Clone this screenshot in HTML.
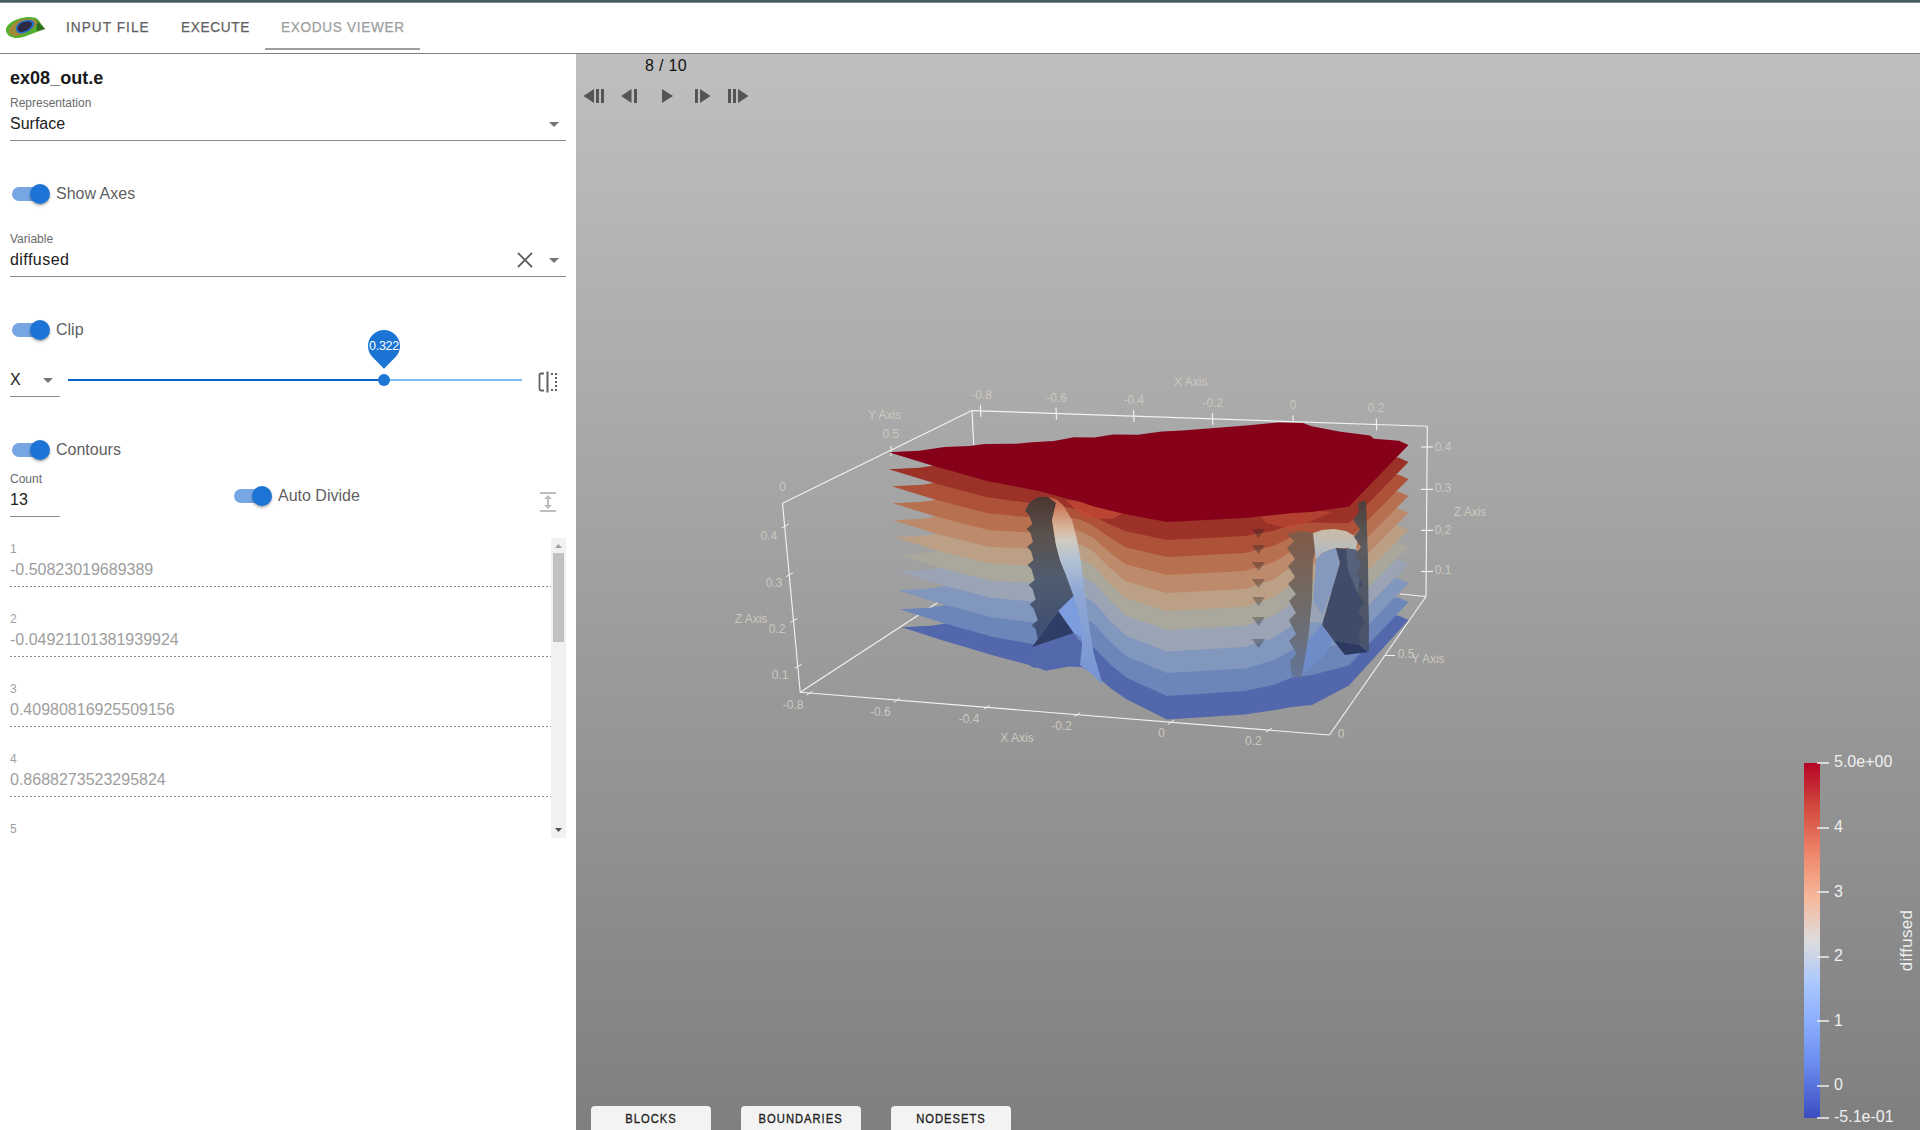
<!DOCTYPE html>
<html><head><meta charset="utf-8">
<style>
*{box-sizing:border-box;margin:0;padding:0}
html,body{width:1920px;height:1130px;overflow:hidden;background:#fff;font-family:"Liberation Sans",sans-serif;color:#212121}
.abs{position:absolute}
.t{position:absolute;white-space:nowrap;line-height:1}
#topbar{position:absolute;left:0;top:0;width:1920px;height:3px;background:linear-gradient(#485a64 0,#455760 2px,#7f8c93 2px)}
#hline{position:absolute;left:0;top:53px;width:1920px;height:1px;background:#7f7f7f}
.tab{position:absolute;top:18.5px;font-size:15.5px;letter-spacing:0.75px;color:#616161;white-space:nowrap;line-height:1;transform:scaleX(0.88);transform-origin:0 0;-webkit-text-stroke:0.25px}
#viewer{position:absolute;left:576px;top:54px;width:1344px;height:1076px;background:linear-gradient(#bfbfbf,#7f7f7f)}
.lbl{position:absolute;font-size:12px;color:#6b6b6b;white-space:nowrap;line-height:1}
.val{position:absolute;font-size:16px;color:#212121;white-space:nowrap;line-height:1}
.uline{position:absolute;height:1px;background:#8c8c8c}
.sw{position:absolute;width:40px;height:24px}
.sw .track{position:absolute;left:0;top:3px;width:34px;height:14px;border-radius:7px;background:#76a6e4}
.sw .knob{position:absolute;left:18px;top:0;width:20px;height:20px;border-radius:50%;background:#1c74d4;box-shadow:0 2px 3px rgba(0,0,0,.25),0 1px 1px rgba(0,0,0,.14)}
.swl{position:absolute;font-size:16px;color:#5f5f5f;white-space:nowrap;line-height:1}
.cidx{position:absolute;font-size:12px;color:#9e9e9e;line-height:1}
.cval{position:absolute;font-size:16px;color:#9e9e9e;white-space:nowrap;line-height:1;margin-top:1px}
.dline{position:absolute;left:10px;width:541px;height:1px;background:repeating-linear-gradient(90deg,#8a8a8a 0 2px,transparent 2px 4px)}
.btn{position:absolute;top:1106px;width:120px;height:30px;background:#f3f3f3;border-radius:4px;font-size:13.5px;letter-spacing:1.2px;color:#212121;text-align:center;font-weight:normal;line-height:1;-webkit-text-stroke:0.35px}
.btn span{display:inline-block;transform:scaleX(0.83)}
.axl{position:absolute;width:80px;text-align:center;font-size:12px;color:#ccc8be;line-height:16px;white-space:nowrap}
.cbl{position:absolute;font-size:16px;color:#efefef;white-space:nowrap;line-height:1}
</style></head><body>
<div id="topbar"></div>
<div id="hline"></div>
<!-- logo -->
<svg class="abs" style="left:0;top:0" width="50" height="45" viewBox="0 0 50 45">
  <path d="M6,31 C5,25 14,19 24,17.5 C30,16.5 35,17 38,19.5 L45,29 C40,31 33,33 25,36.5 C18,39 8,39 6,31 Z" fill="#52b22e"/>
  <path d="M36,19.5 L45,29 L37,31 Z" fill="#2f6e22"/>
  <path d="M9,32 C9,26 15,20 24,19 C31,18 36,19 38,22 C36,27 30,31 24,34 C17,37 10,37 9,32 Z" fill="#a08a3a"/>
  <path d="M16,29 C16,24 21,20 28,20 C33,20 35,22 34,25 C32,30 27,32.5 22,33.5 C18,34 16,32 16,29 Z" fill="#2070d0"/>
  <path d="M17.6,28.5 C18,24.5 22,21.5 27.5,21.5 C31.5,21.5 32.5,23 31.5,25.5 C30,29 26,31 22.5,31.8 C19.5,32.3 17.6,31 17.6,28.5 Z" fill="#2e2a44"/>
</svg>
<div class="tab" style="left:66px;letter-spacing:1.18px">INPUT FILE</div>
<div class="tab" style="left:181px">EXECUTE</div>
<div class="tab" style="left:281px;color:#9e9e9e">EXODUS VIEWER</div>
<div class="abs" style="left:265px;top:48px;width:155px;height:2px;background:#9e9e9e"></div>

<!-- left panel -->
<div class="t" style="left:10px;top:68px;font-size:19px;font-weight:bold;color:#1a1a1a;transform:scaleX(0.95);transform-origin:0 0">ex08_out.e</div>
<div class="lbl" style="left:10px;top:97px">Representation</div>
<div class="val" style="left:10px;top:116px">Surface</div>
<svg class="abs" style="left:549px;top:122px" width="10" height="5"><path d="M0,0 L10,0 L5,5 Z" fill="#757575"/></svg>
<div class="uline" style="left:10px;top:140px;width:556px"></div>

<div class="sw" style="left:12px;top:184px"><div class="track"></div><div class="knob"></div></div>
<div class="swl" style="left:56px;top:186px">Show Axes</div>

<div class="lbl" style="left:10px;top:233px">Variable</div>
<div class="val" style="left:10px;top:252px;letter-spacing:0.45px">diffused</div>
<svg class="abs" style="left:516px;top:251px" width="18" height="18" viewBox="0 0 18 18"><path d="M2,2 L16,16 M16,2 L2,16" stroke="#616161" stroke-width="1.8"/></svg>
<svg class="abs" style="left:549px;top:258px" width="10" height="5"><path d="M0,0 L10,0 L5,5 Z" fill="#757575"/></svg>
<div class="uline" style="left:10px;top:276px;width:556px"></div>

<div class="sw" style="left:12px;top:320px"><div class="track"></div><div class="knob"></div></div>
<div class="swl" style="left:56px;top:322px">Clip</div>

<div class="val" style="left:10px;top:372px">X</div>
<svg class="abs" style="left:43px;top:378px" width="10" height="5"><path d="M0,0 L10,0 L5,5 Z" fill="#757575"/></svg>
<div class="uline" style="left:10px;top:396px;width:50px"></div>
<!-- slider -->
<div class="abs" style="left:68px;top:379px;width:316px;height:2px;background:#0a63c9"></div>
<div class="abs" style="left:384px;top:379px;width:138px;height:2px;background:#82bcf8"></div>
<div class="abs" style="left:378px;top:374px;width:12px;height:12px;border-radius:50%;background:#1c74d4"></div>
<div class="abs" style="left:368px;top:330px;width:32px;height:32px;border-radius:50% 50% 50% 0;background:#1c74d4;transform:rotate(-45deg)"></div>
<div class="t" style="left:369px;top:340px;font-size:12.5px;color:#fff;width:30px;text-align:center;letter-spacing:-0.3px">0.322</div>
<svg class="abs" style="left:536px;top:370px" width="24" height="24" viewBox="0 0 24 24">
 <path d="M8,3.5 H5 Q3.5,3.5 3.5,5 V19 Q3.5,20.5 5,20.5 H8" fill="none" stroke="#616161" stroke-width="1.8"/>
 <rect x="10.5" y="1.5" width="2" height="21" fill="#616161"/>
 <rect x="15" y="3" width="2" height="2" fill="#616161"/><rect x="15" y="19" width="2" height="2" fill="#616161"/>
 <rect x="19" y="3" width="2" height="2" fill="#616161"/><rect x="19" y="7" width="2" height="2" fill="#616161"/><rect x="19" y="11" width="2" height="2" fill="#616161"/><rect x="19" y="15" width="2" height="2" fill="#616161"/><rect x="19" y="19" width="2" height="2" fill="#616161"/>
</svg>

<div class="sw" style="left:12px;top:440px"><div class="track"></div><div class="knob"></div></div>
<div class="swl" style="left:56px;top:442px">Contours</div>

<div class="lbl" style="left:10px;top:473px">Count</div>
<div class="val" style="left:10px;top:492px">13</div>
<div class="uline" style="left:10px;top:516px;width:50px"></div>

<div class="sw" style="left:234px;top:486px"><div class="track"></div><div class="knob"></div></div>
<div class="swl" style="left:278px;top:488px">Auto Divide</div>
<svg class="abs" style="left:536px;top:489px" width="24" height="26" viewBox="0 0 24 26">
 <rect x="4" y="3" width="16" height="2" fill="#bdbdbd"/><rect x="4" y="21" width="16" height="2" fill="#bdbdbd"/>
 <path d="M12,6 L16,10 H13 V16 H16 L12,20 L8,16 H11 V10 H8 Z" fill="#bdbdbd"/>
</svg>

<!-- contour list -->
<div class="abs" style="left:0;top:538px;width:576px;height:300px;overflow:hidden">
 <div class="cidx" style="left:10px;top:5px">1</div>
 <div class="cval" style="left:10px;top:23px">-0.50823019689389</div>
 <div class="dline" style="top:48px"></div>
 <div class="cidx" style="left:10px;top:75px">2</div>
 <div class="cval" style="left:10px;top:93px">-0.04921101381939924</div>
 <div class="dline" style="top:118px"></div>
 <div class="cidx" style="left:10px;top:145px">3</div>
 <div class="cval" style="left:10px;top:163px">0.40980816925509156</div>
 <div class="dline" style="top:188px"></div>
 <div class="cidx" style="left:10px;top:215px">4</div>
 <div class="cval" style="left:10px;top:233px">0.8688273523295824</div>
 <div class="dline" style="top:258px"></div>
 <div class="cidx" style="left:10px;top:285px">5</div>
</div>
<!-- scrollbar -->
<div class="abs" style="left:551px;top:538px;width:15px;height:300px;background:#f1f1f1"></div>
<div class="abs" style="left:553px;top:553px;width:11px;height:89px;background:#c1c1c1"></div>
<svg class="abs" style="left:551px;top:538px" width="15" height="15"><path d="M4,10 L11,10 L7.5,6 Z" fill="#a3a3a3"/></svg>
<svg class="abs" style="left:551px;top:823px" width="15" height="15"><path d="M4,5 L11,5 L7.5,9 Z" fill="#505050"/></svg>

<!-- viewer -->
<div id="viewer"></div>
<div class="t" style="left:645px;top:58px;font-size:16px;color:#111;letter-spacing:0.3px">8 / 10</div>
<svg class="abs" style="left:576px;top:80px" width="200" height="30" viewBox="0 0 200 30">
 <g fill="#555">
  <path d="M7.5,16 L18,9 V23 Z"/><rect x="20" y="9" width="3" height="14"/><rect x="25" y="9" width="3" height="14"/>
  <path d="M45,16 L55.5,9 V23 Z"/><rect x="58" y="9" width="3" height="14"/>
  <path d="M86,9 L97,16 L86,23 Z"/>
  <rect x="119" y="9" width="3" height="14"/><path d="M124,9 L134.5,16 L124,23 Z"/>
  <rect x="152" y="9" width="3" height="14"/><rect x="157" y="9" width="3" height="14"/><path d="M162,9 L172.5,16 L162,23 Z"/>
 </g>
</svg>

<svg class="abs" style="left:0;top:0" width="1920" height="1130" viewBox="0 0 1920 1130">
<line x1="972" y1="410.6" x2="1427.3" y2="426.25" stroke="#f2f2f2" stroke-width="1.15"/>
<line x1="972" y1="410.6" x2="782.5" y2="503.3" stroke="#f2f2f2" stroke-width="1.15"/>
<line x1="972" y1="410.6" x2="974" y2="450" stroke="#f2f2f2" stroke-width="1.15"/>
<line x1="782.5" y1="503.3" x2="800.2" y2="692.3" stroke="#f2f2f2" stroke-width="1.15"/>
<line x1="800.2" y1="692.3" x2="940" y2="601" stroke="#f2f2f2" stroke-width="1.15"/>
<line x1="800.2" y1="692.3" x2="1329.4" y2="735" stroke="#f2f2f2" stroke-width="1.15"/>
<line x1="1329.4" y1="735" x2="1426" y2="596.5" stroke="#f2f2f2" stroke-width="1.15"/>
<line x1="1426" y1="596.5" x2="1427.3" y2="426.25" stroke="#f2f2f2" stroke-width="1.15"/>
<line x1="1426" y1="596.5" x2="1400" y2="594" stroke="#f2f2f2" stroke-width="1.15"/>
<line x1="980.4" y1="404.88873270371187" x2="980.9" y2="416.88873270371187" stroke="#f2f2f2" stroke-width="1.15"/>
<line x1="1056" y1="407.4873270371184" x2="1056.5" y2="419.4873270371184" stroke="#f2f2f2" stroke-width="1.15"/>
<line x1="1133.5" y1="410.1512299582693" x2="1134.0" y2="422.1512299582693" stroke="#f2f2f2" stroke-width="1.15"/>
<line x1="1212.3" y1="412.85981770261367" x2="1212.8" y2="424.85981770261367" stroke="#f2f2f2" stroke-width="1.15"/>
<line x1="1292.9" y1="415.6302767406106" x2="1293.4" y2="427.6302767406106" stroke="#f2f2f2" stroke-width="1.15"/>
<line x1="1376.25" y1="418.49526136613224" x2="1376.75" y2="430.49526136613224" stroke="#f2f2f2" stroke-width="1.15"/>
<line x1="1421" y1="447" x2="1433" y2="447" stroke="#f2f2f2" stroke-width="1.15"/>
<line x1="1421" y1="489.4" x2="1433" y2="489.4" stroke="#f2f2f2" stroke-width="1.15"/>
<line x1="1421" y1="530.4" x2="1433" y2="530.4" stroke="#f2f2f2" stroke-width="1.15"/>
<line x1="1421" y1="571.5" x2="1433" y2="571.5" stroke="#f2f2f2" stroke-width="1.15"/>
<line x1="806.6" y1="695.0584656084656" x2="812.6" y2="691.0584656084656" stroke="#f2f2f2" stroke-width="1"/>
<line x1="894" y1="702.110582010582" x2="900" y2="698.110582010582" stroke="#f2f2f2" stroke-width="1"/>
<line x1="983.7" y1="709.3482804232804" x2="989.7" y2="705.3482804232804" stroke="#f2f2f2" stroke-width="1"/>
<line x1="1074.3" y1="716.6585978835978" x2="1080.3" y2="712.6585978835978" stroke="#f2f2f2" stroke-width="1"/>
<line x1="1168" y1="724.2190476190476" x2="1174" y2="720.2190476190476" stroke="#f2f2f2" stroke-width="1"/>
<line x1="1266" y1="732.126455026455" x2="1272" y2="728.126455026455" stroke="#f2f2f2" stroke-width="1"/>
<line x1="781.625873015873" y1="528" x2="788.625873015873" y2="524" stroke="#f2f2f2" stroke-width="1"/>
<line x1="786.1773015873016" y1="576.6" x2="793.1773015873016" y2="572.6" stroke="#f2f2f2" stroke-width="1"/>
<line x1="790.4665079365079" y1="622.4" x2="797.4665079365079" y2="618.4" stroke="#f2f2f2" stroke-width="1"/>
<line x1="794.7603968253968" y1="668.25" x2="801.7603968253968" y2="664.25" stroke="#f2f2f2" stroke-width="1"/>
<line x1="891" y1="446" x2="891" y2="456" stroke="#f2f2f2" stroke-width="1"/>
<line x1="1385" y1="655.5" x2="1395" y2="655.5" stroke="#f2f2f2" stroke-width="1"/>
<defs>
<linearGradient id="lw" x1="0" y1="0" x2="0" y2="1"><stop offset="0" stop-color="#4a3630"/><stop offset="0.25" stop-color="#5a514c"/><stop offset="0.55" stop-color="#505c70"/><stop offset="1" stop-color="#3a4a72"/></linearGradient>
<linearGradient id="ls" x1="0" y1="0" x2="0" y2="1"><stop offset="0" stop-color="#c05a42"/><stop offset="0.08" stop-color="#d08a6c"/><stop offset="0.16" stop-color="#d8b498"/><stop offset="0.23" stop-color="#d0ccc0"/><stop offset="0.33" stop-color="#b4c2d4"/><stop offset="0.5" stop-color="#90a8d4"/><stop offset="1" stop-color="#7494d4"/></linearGradient>
<linearGradient id="ra" x1="0" y1="0" x2="0" y2="1"><stop offset="0" stop-color="#cbbba6"/><stop offset="0.55" stop-color="#bcbcba"/><stop offset="1" stop-color="#a4b2c8"/></linearGradient>
<linearGradient id="rw" x1="0" y1="0" x2="0" y2="1"><stop offset="0" stop-color="#805a48"/><stop offset="0.35" stop-color="#75675e"/><stop offset="0.7" stop-color="#6a6e78"/><stop offset="1" stop-color="#627496"/></linearGradient>
<linearGradient id="rr" x1="0" y1="0" x2="0" y2="1"><stop offset="0" stop-color="#4e3e38"/><stop offset="0.3" stop-color="#5c5c60"/><stop offset="1" stop-color="#46526c"/></linearGradient>
</defs>
<polygon points="901.8,627.3 931.0,625.8 954.8,621.9 978.6,621.1 993.5,619.0 1023.1,618.8 1038.2,617.2 1059.0,616.0 1078.3,612.2 1097.8,612.5 1115.5,609.4 1139.4,609.7 1161.9,606.5 1182.5,605.4 1224.0,602.3 1249.0,600.2 1278.0,597.5 1303.0,598.0 1311.7,601.2 1338.8,606.5 1370.0,610.6 1374.0,613.8 1399.0,615.8 1408.5,620.0 1349.0,685.6 1312.0,705.0 1292.0,707.1 1274.0,710.2 1245.0,714.4 1167.0,719.5 1127.0,699.5 1110.8,688.6 1095.5,674.9 1082.2,667.3 1068.8,666.6 1045.9,670.8 1032.6,665.8 994.5,655.7 943.9,640.7" fill="#5367ad"/>
<polygon points="899.8,609.3 929.2,607.8 953.2,603.9 977.2,603.1 992.2,601.0 1022.0,600.8 1037.2,599.2 1058.2,598.0 1077.7,594.2 1097.3,594.5 1115.1,591.4 1139.1,591.7 1161.9,588.5 1182.5,587.4 1224.0,584.3 1249.0,582.2 1278.0,579.5 1303.0,580.0 1311.7,583.2 1338.8,588.5 1370.0,592.6 1374.0,595.8 1399.0,597.8 1408.5,602.0 1349.0,665.3 1312.0,674.9 1292.0,677.6 1274.0,684.7 1245.0,691.1 1167.0,696.0 1126.7,677.7 1110.3,664.6 1095.0,648.7 1081.5,641.1 1068.1,640.2 1045.0,646.1 1031.6,644.0 993.2,636.9 942.3,622.7" fill="#6c86b9"/>
<polygon points="897.8,590.3 927.4,588.8 951.6,584.9 975.8,584.1 990.9,582.0 1020.9,581.8 1036.3,580.2 1057.4,579.0 1077.0,575.2 1096.7,575.5 1114.7,572.4 1138.9,572.7 1161.9,569.5 1182.5,568.4 1224.0,565.3 1249.0,563.2 1278.0,560.5 1303.0,561.0 1311.7,564.2 1338.8,569.5 1370.0,573.6 1374.0,576.8 1399.0,578.8 1408.5,583.0 1349.0,645.0 1312.0,647.0 1292.0,650.1 1274.0,660.2 1245.0,668.4 1167.0,673.0 1126.4,656.2 1109.9,641.6 1094.4,624.3 1080.9,616.7 1067.3,615.6 1044.1,622.1 1030.6,622.2 991.9,617.3 940.6,603.7" fill="#8297bd"/>
<polygon points="897.8,571.3 927.4,569.8 951.6,565.9 975.8,565.1 990.9,563.0 1020.9,562.8 1036.3,561.2 1057.4,560.0 1077.0,556.2 1096.7,556.5 1114.7,553.4 1138.9,553.7 1161.9,550.5 1182.5,549.4 1224.0,546.3 1249.0,544.2 1278.0,541.5 1303.0,542.0 1311.7,545.2 1338.8,550.5 1370.0,554.6 1374.0,557.8 1399.0,559.8 1408.5,564.0 1349.0,625.5 1312.0,622.2 1292.0,625.6 1274.0,637.7 1245.0,647.0 1167.0,651.5 1126.4,636.0 1109.9,620.6 1094.4,602.6 1080.9,594.9 1067.3,593.5 1044.1,599.7 1030.6,601.3 991.9,597.9 940.6,584.7" fill="#9aa4b5"/>
<polygon points="896.8,554.3 926.5,552.8 950.8,548.9 975.1,548.1 990.2,546.0 1020.3,545.8 1035.8,544.2 1057.0,543.0 1076.7,539.2 1096.5,539.5 1114.6,536.4 1138.8,536.7 1161.9,533.5 1182.5,532.4 1224.0,529.3 1249.0,527.2 1278.0,524.5 1303.0,525.0 1311.7,528.2 1338.8,533.5 1370.0,537.6 1374.0,540.8 1399.0,542.8 1408.5,547.0 1349.0,606.8 1312.0,599.6 1292.0,603.0 1274.0,616.0 1245.0,625.7 1167.0,630.0 1126.2,616.0 1109.7,600.6 1094.2,582.9 1080.6,575.4 1067.0,573.8 1043.7,580.1 1030.1,582.9 991.2,580.7 939.7,567.7" fill="#aaa89d"/>
<polygon points="894.8,537.3 924.7,535.8 949.2,531.9 973.7,531.1 988.9,529.0 1019.3,528.8 1034.8,527.2 1056.2,526.0 1076.0,522.2 1096.0,522.5 1114.2,519.4 1138.6,519.7 1161.8,516.5 1182.5,515.4 1224.0,512.3 1249.0,510.2 1278.0,507.5 1303.0,508.0 1311.7,511.2 1338.8,516.5 1370.0,520.6 1374.0,523.8 1399.0,525.8 1408.5,530.0 1349.0,589.5 1312.0,580.4 1292.0,583.7 1274.0,597.0 1245.0,606.8 1167.0,611.0 1125.9,598.2 1109.3,583.2 1093.6,566.0 1079.9,558.7 1066.2,556.9 1042.7,562.1 1029.0,565.4 989.9,563.6 938.0,550.7" fill="#bca085"/>
<polygon points="892.8,520.3 923.0,518.8 947.6,514.9 972.2,514.1 987.6,512.0 1018.2,511.8 1033.8,510.2 1055.4,509.0 1075.3,505.2 1095.4,505.5 1113.8,502.4 1138.4,502.7 1161.8,499.5 1182.5,498.4 1224.0,495.3 1249.0,493.2 1278.0,490.5 1303.0,491.0 1311.7,494.2 1338.8,499.5 1370.0,503.6 1374.0,506.8 1399.0,508.8 1408.5,513.0 1349.0,572.8 1312.0,563.4 1292.0,566.6 1274.0,579.3 1245.0,588.9 1167.0,593.0 1125.6,581.2 1108.8,567.1 1093.1,551.1 1079.3,544.0 1065.5,541.9 1041.8,545.5 1028.0,548.6 988.6,546.7 936.4,533.7" fill="#bd8a6b"/>
<polygon points="892.8,503.3 923.0,501.8 947.6,497.9 972.2,497.1 987.6,495.0 1018.2,494.8 1033.8,493.2 1055.4,492.0 1075.3,488.2 1095.4,488.5 1113.8,485.4 1138.4,485.7 1161.8,482.5 1182.5,481.4 1224.0,478.3 1249.0,476.2 1278.0,473.5 1303.0,474.0 1311.7,477.2 1338.8,482.5 1370.0,486.6 1374.0,489.8 1399.0,491.8 1408.5,496.0 1349.0,556.1 1312.0,548.0 1292.0,550.9 1274.0,562.3 1245.0,570.9 1167.0,575.0 1125.6,564.2 1108.8,551.7 1093.1,537.6 1079.3,530.9 1065.5,528.5 1041.8,530.1 1028.0,532.5 988.6,529.9 936.4,516.7" fill="#b87150"/>
<polygon points="891.8,486.3 922.1,484.8 946.8,480.9 971.5,480.1 987.0,478.0 1017.6,477.8 1033.4,476.2 1055.0,475.0 1075.0,471.2 1095.2,471.5 1113.6,468.4 1138.3,468.7 1161.8,465.5 1182.5,464.4 1224.0,461.3 1249.0,459.2 1278.0,456.5 1303.0,457.0 1311.7,460.2 1338.8,465.5 1370.0,469.6 1374.0,472.8 1399.0,474.8 1408.5,479.0 1349.0,539.4 1312.0,534.3 1292.0,536.7 1274.0,545.7 1245.0,553.0 1167.0,557.0 1125.5,547.2 1108.6,536.9 1092.8,525.6 1079.0,519.3 1065.1,516.7 1041.4,515.9 1027.5,517.1 988.0,513.3 935.5,499.7" fill="#ad5239"/>
<polygon points="888.8,469.3 919.4,467.8 944.4,463.9 969.4,463.1 985.0,461.0 1016.0,460.8 1031.9,459.2 1053.8,458.0 1074.0,454.2 1094.4,454.5 1113.0,451.4 1138.0,451.7 1161.7,448.5 1182.5,447.4 1224.0,444.3 1249.0,442.2 1278.0,439.5 1303.0,440.0 1311.7,443.2 1338.8,448.5 1370.0,452.6 1374.0,455.8 1399.0,457.8 1408.5,462.0 1349.0,523.2 1312.0,522.6 1292.0,524.4 1274.0,530.5 1245.0,536.0 1167.0,540.0 1125.0,531.0 1108.0,523.5 1092.0,515.3 1078.0,509.5 1064.0,506.7 1040.0,503.1 1026.0,502.5 986.0,496.9 933.0,482.7" fill="#9c3128"/>
<polygon points="1252.0,529.0 1265.0,529.0 1258.5,538.0" fill="#1e1e28" fill-opacity="0.32"/>
<polygon points="1252.0,545.0 1265.0,545.0 1258.5,554.0" fill="#1e1e28" fill-opacity="0.32"/>
<polygon points="1252.0,562.0 1265.0,562.0 1258.5,571.0" fill="#1e1e28" fill-opacity="0.32"/>
<polygon points="1252.0,579.0 1265.0,579.0 1258.5,588.0" fill="#1e1e28" fill-opacity="0.32"/>
<polygon points="1252.0,597.0 1265.0,597.0 1258.5,606.0" fill="#1e1e28" fill-opacity="0.32"/>
<polygon points="1252.0,617.0 1265.0,617.0 1258.5,626.0" fill="#1e1e28" fill-opacity="0.32"/>
<polygon points="1252.0,639.0 1265.0,639.0 1258.5,648.0" fill="#1e1e28" fill-opacity="0.32"/>
<polygon points="1066.0,500.0 1100.0,505.0 1125.0,512.0 1112.0,519.0 1084.0,518.0" fill="#c44a36" fill-opacity="0.75"/>
<polygon points="1259.0,514.0 1300.0,509.0 1332.0,512.0 1312.0,521.0 1292.0,529.0 1266.0,523.0" fill="#c04a36" fill-opacity="0.65"/>
<polygon points="1030.0,502.0 1038.0,497.0 1048.0,497.0 1056.0,503.0 1052.0,520.0 1056.0,545.0 1060.0,560.0 1066.0,575.0 1073.7,596.0 1058.3,611.0 1032.3,647.0 1038.3,642.0 1035.8,629.3 1031.8,625.3 1037.8,620.3 1033.6,608.6 1029.6,604.6 1035.6,599.6 1032.6,589.0 1028.6,585.0 1034.6,580.0 1031.5,569.0 1027.5,565.0 1033.5,560.0 1031.0,551.0 1027.0,547.0 1033.0,542.0 1030.5,533.0 1026.5,529.0 1032.5,524.0 1029.0,515.0 1025.0,511.0" fill="url(#lw)"/>
<polygon points="1032.3,647.0 1073.7,633.0 1082.0,645.0 1080.0,665.0 1060.0,664.0 1035.0,668.0 1030.0,666.0" fill="#5468ac"/>
<polygon points="1048.0,497.0 1056.0,503.0 1052.0,520.0 1056.0,545.0 1060.0,560.0 1066.0,575.0 1073.7,596.0 1080.0,620.0 1082.0,645.0 1080.0,665.0 1093.0,675.0 1103.0,685.0 1094.0,655.0 1089.0,625.0 1085.0,595.0 1081.0,562.0 1077.0,540.0 1072.0,520.0 1063.0,505.0 1056.0,499.0" fill="url(#ls)"/>
<polygon points="1058.3,611.0 1073.7,596.0 1080.0,620.0 1083.0,638.0 1073.7,633.0" fill="#7c9ee0"/>
<polygon points="1032.3,647.0 1058.3,611.0 1073.7,633.0" fill="#2f3d66"/>
<polygon points="1313.0,533.0 1316.0,548.0 1313.0,560.0 1312.0,600.0 1308.0,640.0 1302.0,678.0 1292.0,676.0 1290.0,661.0 1297.0,654.0 1289.0,641.0 1296.0,634.0 1289.0,620.0 1296.0,613.0 1289.0,601.0 1296.0,594.0 1288.0,584.0 1295.0,577.0 1288.0,566.0 1295.0,559.0 1287.0,548.0 1294.0,541.0 1287.0,534.0 1300.0,531.0" fill="url(#rw)"/>
<polygon points="1313.0,533.0 1322.0,530.0 1334.0,529.0 1346.0,531.0 1358.0,538.0 1356.0,550.0 1346.0,548.0 1336.0,548.0 1322.0,553.0 1316.0,560.0" fill="url(#ra)"/>
<polygon points="1316.0,560.0 1322.0,553.0 1336.0,548.0 1340.0,563.0 1332.0,590.0 1322.0,615.0 1313.0,600.0" fill="#8598bd"/>
<polygon points="1336.0,548.0 1356.0,550.0 1366.0,560.0 1369.0,630.0 1360.0,645.0 1333.0,640.0 1322.0,625.0 1332.0,590.0 1340.0,563.0" fill="#3f4b68"/>
<polygon points="1346.0,548.0 1356.0,550.0 1362.0,556.0 1358.0,595.0 1348.0,570.0" fill="#56627c"/>
<polygon points="1302.0,676.0 1308.0,640.0 1322.0,625.0 1333.0,640.0 1325.0,655.0" fill="#6f8cc8"/>
<polygon points="1333.0,640.0 1360.0,645.0 1368.0,652.0 1345.0,655.0" fill="#2c3a62"/>
<polygon points="1366.0,500.0 1368.0,560.0 1369.0,652.0 1360.0,645.0 1359.0,630.0 1365.0,622.0 1358.0,611.0 1364.0,603.0 1357.0,592.0 1363.0,584.0 1356.0,573.0 1362.0,565.0 1355.0,555.0 1361.0,547.0 1354.0,537.0 1360.0,529.0 1353.0,520.0 1359.0,512.0 1358.0,503.0" fill="url(#rr)"/>
<polygon points="888.8,452.3 919.4,450.8 944.4,446.9 969.4,446.1 985.0,444.0 1016.0,443.8 1031.9,442.2 1053.8,441.0 1074.0,437.2 1094.4,437.5 1113.0,434.4 1138.0,434.7 1161.7,431.5 1182.5,430.4 1224.0,427.3 1249.0,425.2 1278.0,422.5 1303.0,423.0 1311.7,426.2 1338.8,431.5 1370.0,435.6 1374.0,438.8 1399.0,440.8 1408.5,445.0 1349.0,506.5 1312.0,512.0 1292.0,513.0 1274.0,515.0 1245.0,518.0 1167.0,522.0 1125.0,514.0 1108.0,510.0 1092.0,506.0 1078.0,501.0 1064.0,498.0 1040.0,491.3 1026.0,488.5 986.0,480.7 933.0,465.7" fill="#87001a"/>
</svg>
<div class="axl" style="left:941.7px;top:387.4px">-0.8</div>
<div class="axl" style="left:1016.7px;top:389.5px">-0.6</div>
<div class="axl" style="left:1093.8px;top:392.4px">-0.4</div>
<div class="axl" style="left:1172.9px;top:395.0px">-0.2</div>
<div class="axl" style="left:1253.0px;top:397.0px">0</div>
<div class="axl" style="left:1336.0px;top:400.0px">0.2</div>
<div class="axl" style="left:1150.8px;top:373.7px">X Axis</div>
<div class="axl" style="left:844.6px;top:407.4px">Y Axis</div>
<div class="axl" style="left:850.8px;top:426.2px">0.5</div>
<div class="axl" style="left:742.5px;top:479.0px">0</div>
<div class="axl" style="left:728.8px;top:527.8px">0.4</div>
<div class="axl" style="left:734.0px;top:575.0px">0.3</div>
<div class="axl" style="left:737.0px;top:620.8px">0.2</div>
<div class="axl" style="left:740.0px;top:666.6px">0.1</div>
<div class="axl" style="left:711.0px;top:611.0px">Z Axis</div>
<div class="axl" style="left:753.0px;top:697.0px">-0.8</div>
<div class="axl" style="left:840.4px;top:704.0px">-0.6</div>
<div class="axl" style="left:929.0px;top:711.0px">-0.4</div>
<div class="axl" style="left:1021.7px;top:717.8px">-0.2</div>
<div class="axl" style="left:1121.7px;top:725.0px">0</div>
<div class="axl" style="left:1213.3px;top:733.0px">0.2</div>
<div class="axl" style="left:977.0px;top:730.0px">X Axis</div>
<div class="axl" style="left:1366.0px;top:645.8px">0.5</div>
<div class="axl" style="left:1388.0px;top:650.8px">Y Axis</div>
<div class="axl" style="left:1301.0px;top:725.8px">0</div>
<div class="axl" style="left:1403.0px;top:438.7px">0.4</div>
<div class="axl" style="left:1403.0px;top:480.0px">0.3</div>
<div class="axl" style="left:1403.0px;top:521.6px">0.2</div>
<div class="axl" style="left:1403.0px;top:562.4px">0.1</div>
<div class="axl" style="left:1430.0px;top:504.0px">Z Axis</div>

<!-- colorbar -->
<div class="abs" style="left:1804px;top:763px;width:16px;height:355px;background:linear-gradient(#b40426,#d0473d 12%,#ee8468 25%,#f7b89c 38%,#dddcdc 50%,#aac7fd 62%,#8db0fe 72%,#6a8bef 85%,#3b4cc0)"></div>
<svg class="abs" style="left:1816px;top:755px" width="16" height="370">
 <g stroke="#f0f0f0" stroke-width="1.5">
 <line x1="1" y1="8" x2="13" y2="8"/><line x1="1" y1="73" x2="13" y2="73"/><line x1="1" y1="137" x2="13" y2="137"/><line x1="1" y1="202" x2="13" y2="202"/><line x1="1" y1="266" x2="13" y2="266"/><line x1="1" y1="331" x2="13" y2="331"/><line x1="1" y1="363" x2="13" y2="363"/>
 </g>
</svg>
<div class="cbl" style="left:1834px;top:754px">5.0e+00</div>
<div class="cbl" style="left:1834px;top:819px">4</div>
<div class="cbl" style="left:1834px;top:884px">3</div>
<div class="cbl" style="left:1834px;top:948px">2</div>
<div class="cbl" style="left:1834px;top:1013px">1</div>
<div class="cbl" style="left:1834px;top:1077px">0</div>
<div class="cbl" style="left:1834px;top:1109px">-5.1e-01</div>
<div class="cbl" style="left:1871px;top:932px;transform:rotate(-90deg);transform-origin:center;width:70px;text-align:center;font-size:17px;letter-spacing:0.3px">diffused</div>

<div class="btn" style="left:591px;padding-top:6px"><span>BLOCKS</span></div>
<div class="btn" style="left:741px;padding-top:6px"><span>BOUNDARIES</span></div>
<div class="btn" style="left:891px;padding-top:6px"><span>NODESETS</span></div>
</body></html>
